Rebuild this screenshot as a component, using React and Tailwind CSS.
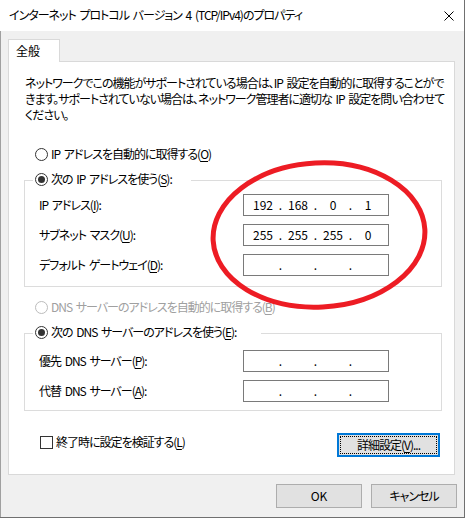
import React from "react";

const U = ({ children }) => <span className="underline underline-offset-[2px]">{children}</span>;

function Radio({ checked, disabled }) {
  return (
    <span
      className={`flex w-[13px] h-[13px] shrink-0 items-center justify-center rounded-full border bg-white ${
        disabled ? "border-[#bcbcbc]" : "border-[#333333]"
      }`}
    >
      {checked && <span className="block w-[7px] h-[7px] rounded-full bg-[#333333]" />}
    </span>
  );
}

function IpBox({ values }) {
  const v = values || ["", "", "", ""];
  return (
    <div className="flex h-[22px] w-[146px] items-center border border-[#7a7a7a] bg-white pl-[6px] tracking-normal">
      {v.map((s, i) => (
        <React.Fragment key={i}>
          <span className="w-[26px] text-center">{s}</span>
          {i < 3 && <span className="w-[9px] text-center">.</span>}
        </React.Fragment>
      ))}
    </div>
  );
}

function Row({ label, values }) {
  return (
    <div className="flex h-[22px] items-center">
      <span className="w-[204px] whitespace-nowrap">{label}</span>
      <IpBox values={values} />
    </div>
  );
}

export default function App() {
  return (
    <div className="relative flex h-[518px] w-[465px] flex-col border-r border-b border-[#707070] bg-white text-[12px] leading-[16px] tracking-[-1px] [word-spacing:2px] text-black font-['Noto_Sans_CJK_JP',sans-serif] [font-feature-settings:'palt']">
      {/* title bar */}
      <div className="flex h-[31px] shrink-0 items-center justify-between bg-white pl-[9px] pr-[10px]">
        <span className="-mt-[1px] whitespace-nowrap">インターネット プロトコル バージョン 4 (TCP/IPv4)のプロパティ</span>
        <svg width="10" height="10" viewBox="0 0 10 10" className="mt-[1px]">
          <path d="M0.5 0.5 L9.5 9.5 M9.5 0.5 L0.5 9.5" stroke="#000" strokeWidth="1" fill="none" />
        </svg>
      </div>

      {/* body */}
      <div className="flex flex-1 flex-col border-l border-[#a0a0a0] bg-[#f0f0f0] pl-[7px] pt-[8px]">
        {/* tab */}
        <div className="relative z-10 -mb-px flex h-[23px] w-[52px] items-start border border-b-0 border-[#d9d9d9] bg-white pl-[7px] pt-[3px] tracking-normal">
          全般
        </div>
        {/* panel */}
        <div className="flex h-[414px] w-[447px] flex-col border border-[#d9d9d9] bg-white">
          <div className="mt-[13px] pl-[16px] whitespace-nowrap">
            ネットワークでこの機能がサポートされている場合は、IP 設定を自動的に取得することがで
            <br />
            きます。サポートされていない場合は、ネットワーク管理者に適切な IP 設定を問い合わせて
            <br />
            ください。
          </div>

          <div className="mt-[23px] flex h-[16px] items-center gap-[3px] pl-[26px]">
            <Radio />
            <span className="whitespace-nowrap">
              IP アドレスを自動的に取得する(<U>O</U>)
            </span>
          </div>

          {/* group 1 */}
          <div className="ml-[15px] mt-[18px] flex w-[418px] flex-col border border-[#dcdcdc] pb-[10px]">
            <div className="-mt-[10px] ml-[8px] flex h-[16px] w-[158px] items-center gap-[3px] bg-white pl-[2px]">
              <Radio checked />
              <span className="whitespace-nowrap">
                次の IP アドレスを使う(<U>S</U>):
              </span>
            </div>
            <div className="mt-[7px] flex flex-col gap-[8px] pl-[14px]">
              <Row label={<>IP アドレス(<U>I</U>):</>} values={["192", "168", "0", "1"]} />
              <Row label={<>サブネット マスク(<U>U</U>):</>} values={["255", "255", "255", "0"]} />
              <Row label={<>デフォルト ゲートウェイ(<U>D</U>):</>} />
            </div>
          </div>

          <div className="mt-[12px] flex h-[16px] items-center gap-[3px] pl-[26px] text-[#a0a0a0]">
            <Radio disabled />
            <span className="whitespace-nowrap">
              DNS サーバーのアドレスを自動的に取得する(<U>B</U>)
            </span>
          </div>

          {/* group 2 */}
          <div className="ml-[15px] mt-[18px] flex w-[418px] flex-col border border-[#dcdcdc] pb-[8px]">
            <div className="-mt-[10px] ml-[8px] flex h-[16px] w-[228px] items-center gap-[3px] bg-white pl-[2px]">
              <Radio checked />
              <span className="whitespace-nowrap">
                次の DNS サーバーのアドレスを使う(<U>E</U>):
              </span>
            </div>
            <div className="mt-[10px] flex flex-col gap-[8px] pl-[14px]">
              <Row label={<>優先 DNS サーバー(<U>P</U>):</>} />
              <Row label={<>代替 DNS サーバー(<U>A</U>):</>} />
            </div>
          </div>

          {/* checkbox + advanced */}
          <div className="mt-[22px] flex items-start justify-between pl-[31px] pr-[14px]">
            <div className="mt-[1px] flex h-[16px] items-center gap-[3px]">
              <span className="block h-[13px] w-[13px] shrink-0 border border-[#333333] bg-white" />
              <span className="whitespace-nowrap">
                終了時に設定を検証する(<U>L</U>)
              </span>
            </div>
            <div className="flex h-[24px] w-[103px] border-2 border-[#0078d7] bg-[#e1e1e1] p-px">
              <div className="flex flex-1 items-center justify-center border border-dotted border-black">
                詳細設定(<U>V</U>)...
              </div>
            </div>
          </div>
        </div>

        {/* bottom buttons */}
        <div className="mt-[9px] flex justify-end gap-[9px] pr-[7px]">
          <div className="flex h-[24px] w-[86px] items-center justify-center border border-[#adadad] bg-[#e1e1e1] tracking-normal">OK</div>
          <div className="flex h-[24px] w-[86px] items-center justify-center border border-[#adadad] bg-[#e1e1e1]">キャンセル</div>
        </div>
      </div>

      {/* red annotation ellipse */}
      <svg className="pointer-events-none absolute left-0 top-0" width="465" height="518" viewBox="0 0 465 518">
        <ellipse cx="319" cy="235" rx="106" ry="72" fill="none" stroke="#ed1c24" strokeWidth="5" transform="rotate(-3 319 235)" />
      </svg>
    </div>
  );
}
